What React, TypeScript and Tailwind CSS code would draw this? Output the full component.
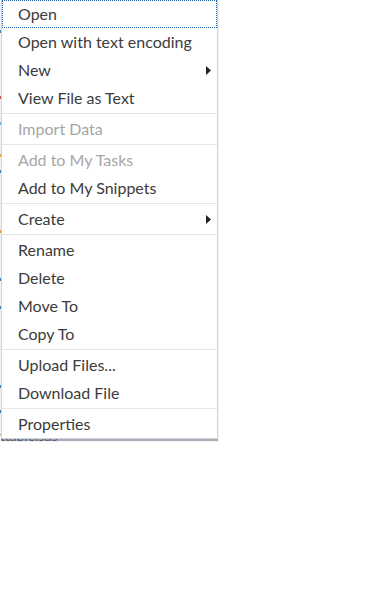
import React from 'react';

type Item = { label: string; disabled?: boolean; submenu?: boolean; focused?: boolean };

const groups: Item[][] = [
    [
        { label: 'Open', focused: true },
        { label: 'Open with text encoding' },
        { label: 'New', submenu: true },
        { label: 'View File as Text' },
    ],
    [{ label: 'Import Data', disabled: true }],
    [{ label: 'Add to My Tasks', disabled: true }, { label: 'Add to My Snippets' }],
    [{ label: 'Create', submenu: true }],
    [{ label: 'Rename' }, { label: 'Delete' }, { label: 'Move To' }, { label: 'Copy To' }],
    [{ label: 'Upload Files...' }, { label: 'Download File' }],
    [{ label: 'Properties' }],
];

// bits of the file tree peeking out left of the menu
const peeks = [
    { top: 30, color: 'bg-[#3b82c4]' },
    { top: 96, color: 'bg-[#d9534f]' },
    { top: 122, color: 'bg-[#5bc0de]' },
    { top: 154, color: 'bg-[#f0a030]' },
    { top: 170, color: 'bg-[#3b82c4]' },
    { top: 230, color: 'bg-[#f0a030]' },
    { top: 278, color: 'bg-[#3b82c4]' },
    { top: 306, color: 'bg-[#3b82c4]' },
    { top: 385, color: 'bg-[#3b82c4]' },
    { top: 410, color: 'bg-[#3b82c4]' },
];

const MenuRow: React.FC<{ item: Item }> = ({ item }) => (
    <div
        className={`flex h-[28px] items-center justify-between pl-[16px] pr-[6px] text-[16px] ${
            item.disabled ? 'text-[#a6a6a6]' : 'text-[#3c3c3c]'
        } ${item.focused ? 'outline-1 outline-dotted outline-[#1f5fa8] -outline-offset-1' : ''}`}
    >
        <span>{item.label}</span>
        {item.submenu && (
            <svg width="5" height="9" viewBox="0 0 5 9">
                <path d="M0 0 L5 4.5 L0 9 Z" fill="#222" />
            </svg>
        )}
    </div>
);

export default function App() {
    return (
        <div className="relative h-[601px] w-[390px] overflow-hidden bg-white" style={{ fontFamily: 'Lato, "Open Sans", sans-serif' }}>
            {peeks.map((p) => (
                <div key={p.top} className={`absolute left-0 h-[3px] w-[2px] ${p.color}`} style={{ top: p.top }} />
            ))}
            <div className="absolute left-0 top-[429px] text-[14px] leading-none text-[#444]">ttable.sas</div>

            <div className="absolute left-[1px] top-0 w-[217px] border border-t-0 border-[#cfd4db] bg-white shadow-[0_2px_1px_rgba(100,110,130,0.55)]">
                {groups.map((g, i) => (
                    <div key={i} className={i > 0 ? 'border-t border-[#e3e5e8] pt-[1px] mt-[1px]' : ''}>
                        {g.map((item) => (
                            <MenuRow key={item.label} item={item} />
                        ))}
                    </div>
                ))}
            </div>
        </div>
    );
}
